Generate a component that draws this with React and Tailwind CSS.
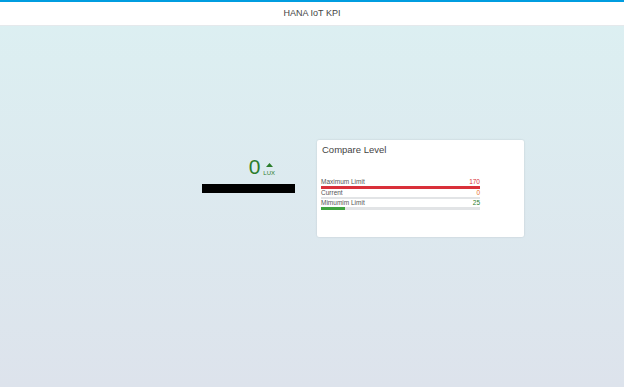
import React from 'react';

const rows = [
  { label: 'Maximum Limit', value: '170', valueColor: 'text-[#d9303a]', track: 'bg-[#d9303a]', fill: 0, barH: 'h-[3px]' },
  { label: 'Current', value: '0', valueColor: 'text-[#e9732b]', track: 'bg-[#e2e4e6]', fill: 0, barH: 'h-[2px]' },
  { label: 'Mimumim Limit', value: '25', valueColor: 'text-[#2b7d2b]', track: 'bg-[#e2e4e6]', fill: 15, barH: 'h-[3px]' },
];

const App = () => {
  return (
    <div className="w-[624px] h-[387px] flex flex-col bg-gradient-to-b from-[#dcf0f2] to-[#dde3ec] font-['Liberation_Sans',Arial,sans-serif] overflow-hidden">
      {/* Shell header */}
      <div className="h-[2px] bg-[#009de0]" />
      <div className="h-[24px] bg-white border-b border-[#e5e9ec] flex items-center justify-center">
        <span className="text-[9px] text-[#444]">HANA IoT KPI</span>
      </div>

      {/* Content */}
      <div className="flex gap-[22px] ml-[202px] mt-[114px]">
        {/* KPI tile */}
        <div className="w-[93px] flex flex-col pt-[16px]">
          <div className="flex items-end justify-end pr-[20px] gap-[3px]">
            <span className="text-[21px] leading-none text-[#2b7d2b]">0</span>
            <div className="flex flex-col items-center pb-[1px]">
              <svg width="7" height="4" viewBox="0 0 7 4" className="mb-[3px]">
                <polygon points="3.5,0 7,4 0,4" fill="#2b7d2b" />
              </svg>
              <span className="text-[6px] leading-none text-[#2b7d2b]">LUX</span>
            </div>
          </div>
          <div className="mt-[7px] h-[9px] w-full bg-black" />
        </div>

        {/* Compare card */}
        <div className="w-[207px] h-[97px] bg-white rounded-[2px] shadow-[0_0_2px_rgba(0,0,0,0.15)] pt-[5px] pl-[5px]">
          <div className="text-[9.5px] text-[#444] leading-none">Compare Level</div>
          <div className="mt-[23px] w-[159px] -ml-[1px] flex flex-col">
            {rows.map((r) => (
              <div key={r.label}>
                <div className="flex justify-between text-[6.5px] leading-[8px]">
                  <span className="text-[#555]">{r.label}</span>
                  <span className={r.valueColor}>{r.value}</span>
                </div>
                <div className={`${r.barH} w-full ${r.track}`}>
                  {r.fill > 0 && (
                    <div className="h-full bg-[#3fa33f]" style={{ width: `${r.fill}%` }} />
                  )}
                </div>
              </div>
            ))}
          </div>
        </div>
      </div>
    </div>
  );
};

export default App;
